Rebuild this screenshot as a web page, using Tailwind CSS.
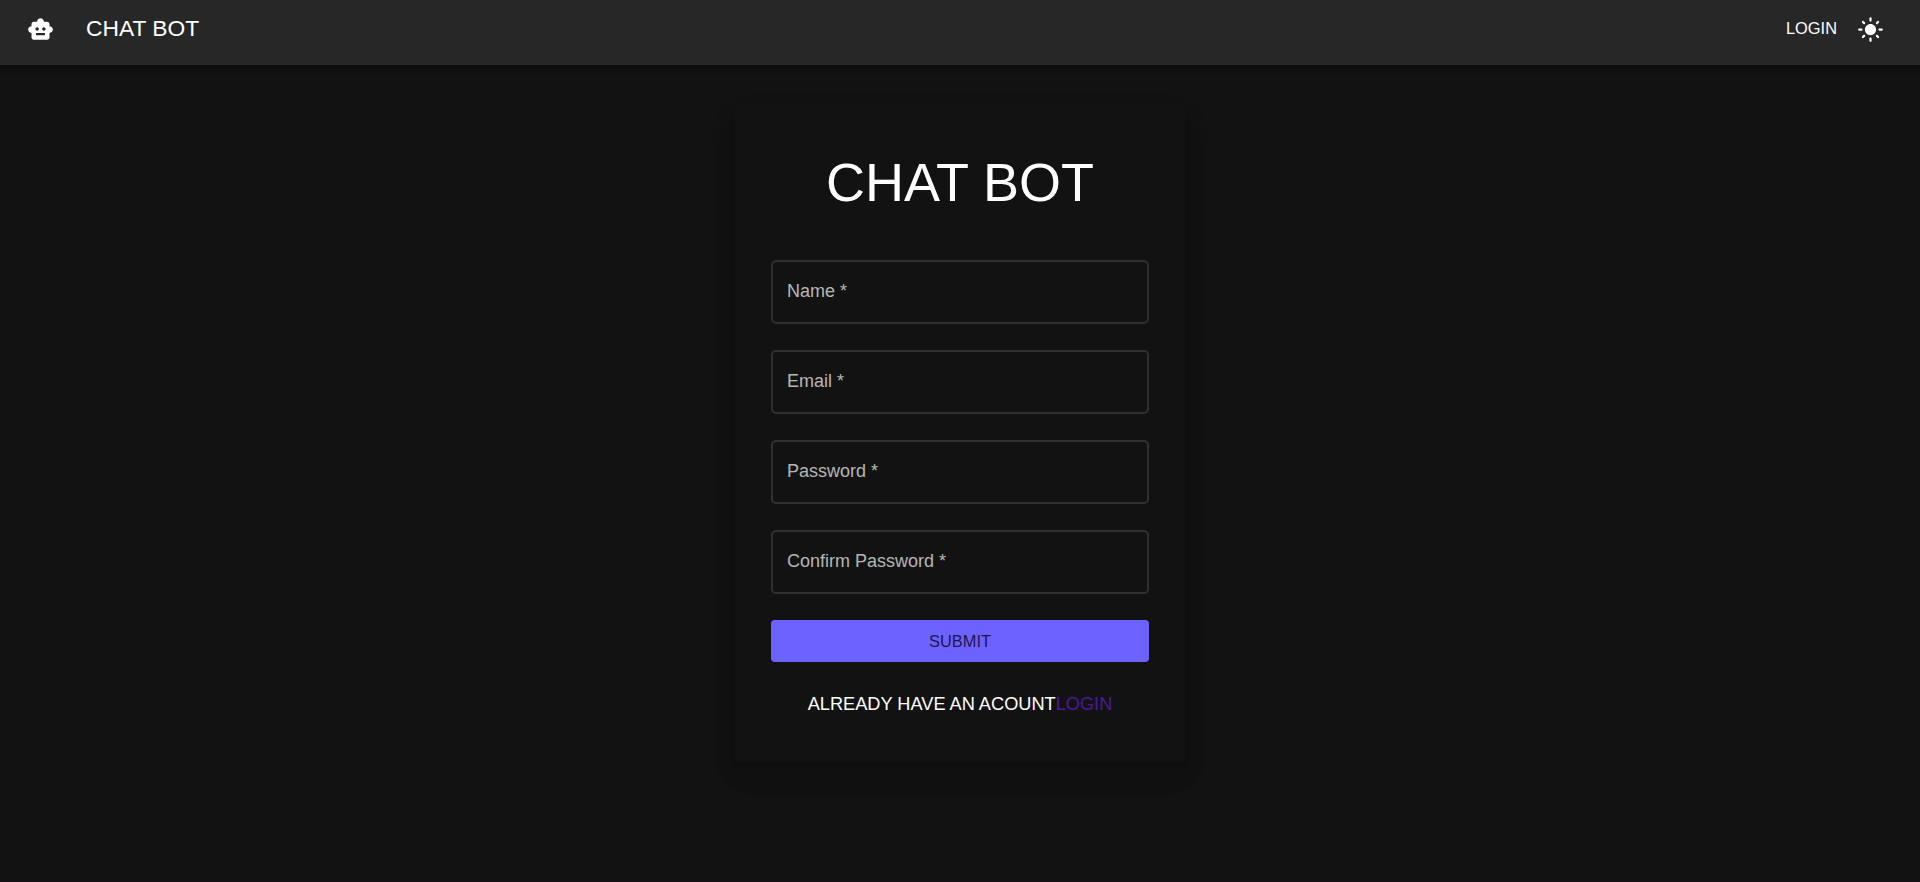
<!DOCTYPE html>
<html lang="en">
  <head>
    <meta charset="UTF-8" />
    <meta name="viewport" content="width=device-width, initial-scale=1.0" />
    <title>Chat Bot</title>
    <script src="https://cdn.jsdelivr.net/npm/@tailwindcss/browser@4"></script>
  </head>
  <body class="bg-[#121212] h-[882px] overflow-hidden font-['Liberation_Sans',Arial,sans-serif] text-white">
    <!-- Navbar -->
    <header class="h-[65px] bg-[#272727] flex items-center justify-between pl-[27px] pr-[36px] pb-[7px] shadow-[0_2px_4px_-1px_rgba(0,0,0,0.2),0_4px_5px_0_rgba(0,0,0,0.14),0_1px_10px_0_rgba(0,0,0,0.12)]">
      <div class="flex items-center">
        <svg class="w-[27px] h-[27px] fill-white" viewBox="0 0 24 24">
          <path d="M20 9V7c0-1.1-.9-2-2-2h-3c0-1.66-1.34-3-3-3S9 3.34 9 5H6c-1.1 0-2 .9-2 2v2c-1.66 0-3 1.34-3 3s1.34 3 3 3v4c0 1.1.9 2 2 2h12c1.1 0 2-.9 2-2v-4c1.66 0 3-1.34 3-3s-1.34-3-3-3zM7.5 11.5c0-.83.67-1.5 1.5-1.5s1.5.67 1.5 1.5S9.83 13 9 13s-1.5-.67-1.5-1.5zM16 17H8v-2h8v2zm-1-4c-.83 0-1.5-.67-1.5-1.5S14.17 10 15 10s1.5.67 1.5 1.5S15.83 13 15 13z" />
        </svg>
        <span class="ml-[32px] pb-[2px] text-[22.8px] leading-none">CHAT BOT</span>
      </div>
      <div class="flex items-center">
        <a class="pb-[2px] text-[16.4px] leading-none">LOGIN</a>
        <svg class="ml-[20px] w-[27px] h-[27px] fill-white" viewBox="0 0 24 24">
          <path d="M12 7c-2.76 0-5 2.24-5 5s2.24 5 5 5 5-2.24 5-5-2.24-5-5-5zM2 13h2c.55 0 1-.45 1-1s-.45-1-1-1H2c-.55 0-1 .45-1 1s.45 1 1 1zm18 0h2c.55 0 1-.45 1-1s-.45-1-1-1h-2c-.55 0-1 .45-1 1s.45 1 1 1zM11 2v2c0 .55.45 1 1 1s1-.45 1-1V2c0-.55-.45-1-1-1s-1 .45-1 1zm0 18v2c0 .55.45 1 1 1s1-.45 1-1v-2c0-.55-.45-1-1-1s-1 .45-1 1zM5.99 4.58c-.39-.39-1.03-.39-1.41 0-.39.39-.39 1.03 0 1.41l1.06 1.06c.39.39 1.03.39 1.41 0s.39-1.03 0-1.41L5.99 4.58zm12.37 12.37c-.39-.39-1.03-.39-1.41 0-.39.39-.39 1.03 0 1.41l1.06 1.06c.39.39 1.03.39 1.41 0 .39-.39.39-1.03 0-1.41l-1.06-1.06zm1.06-10.96c.39-.39.39-1.03 0-1.41-.39-.39-1.03-.39-1.41 0l-1.06 1.06c-.39.39-.39 1.03 0 1.41s1.03.39 1.41 0l1.06-1.06zM7.05 18.36c.39-.39.39-1.03 0-1.41-.39-.39-1.03-.39-1.41 0l-1.06 1.06c-.39.39-.39 1.03 0 1.41s1.03.39 1.41 0l1.06-1.06z" />
        </svg>
      </div>
    </header>

    <!-- Signup card -->
    <main class="w-[450px] mx-auto mt-[40px] h-[657px] px-[36px] pt-[45px] rounded-[4px] bg-[#121212] shadow-[0_10px_10px_-5px_rgba(0,0,0,0.12),0_18px_24px_0_rgba(0,0,0,0.06),0_10px_30px_2px_rgba(0,0,0,0.05)]">
      <h1 class="text-center text-[54px] leading-[64px] mb-[46px]">CHAT BOT</h1>
      <form class="flex flex-col gap-[26px]">
        <div class="h-[64px] border-2 border-[#303030] rounded-[5px] px-[14px] pb-[2px] flex items-center text-[18px] text-white/70">Name *</div>
        <div class="h-[64px] border-2 border-[#303030] rounded-[5px] px-[14px] pb-[2px] flex items-center text-[18px] text-white/70">Email *</div>
        <div class="h-[64px] border-2 border-[#303030] rounded-[5px] px-[14px] pb-[2px] flex items-center text-[18px] text-white/70">Password *</div>
        <div class="h-[64px] border-2 border-[#303030] rounded-[5px] px-[14px] pb-[2px] flex items-center text-[18px] text-white/70">Confirm Password *</div>
        <button type="button" class="h-[42px] bg-[#6c63ff] rounded-[4px] text-[16.4px] text-[#1e1550]">SUBMIT</button>
      </form>
      <p class="mt-[32px] text-center text-[18.2px] leading-[21px]">ALREADY HAVE AN ACOUNT<a class="text-[#4a1a9a]">LOGIN</a></p>
    </main>
  </body>
</html>
